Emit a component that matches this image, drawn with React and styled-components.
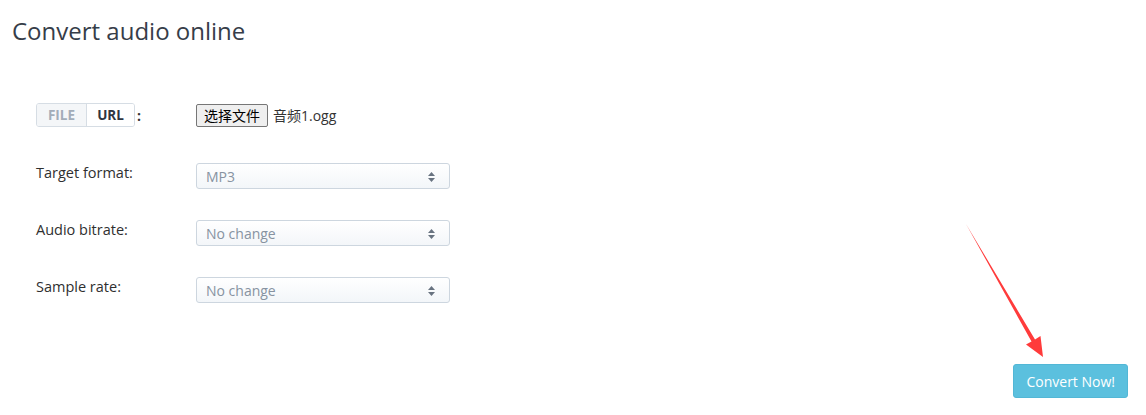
import React from "react";
import styled, { createGlobalStyle } from "styled-components";

const Global = createGlobalStyle`
  html, body { margin: 0; padding: 0; background: #ffffff; }
  body { font-family: "Open Sans", "Noto Sans", sans-serif; color: #333; }
`;

const Page = styled.div`
  position: relative;
  width: 1146px;
  height: 415px;
  box-sizing: border-box;
  padding: 14px 18px 0 12px;
`;

const Title = styled.h1`
  margin: 0;
  font-size: 24px;
  font-weight: 400;
  line-height: 33px;
  color: #363d49;
`;

const Form = styled.div`
  display: flex;
  flex-direction: column;
  gap: 31px;
  margin: 56px 0 0 24px;
`;

const Row = styled.div`
  display: grid;
  grid-template-columns: 160px 254px;
  align-items: ${(p) => (p.$center ? "center" : "start")};
  margin-bottom: ${(p) => (p.$first ? "5px" : "0")};
`;

const Label = styled.div`
  font-size: 14.5px;
  line-height: 19px;
  color: #2f2f2f;
`;

const Toggle = styled.div`
  display: flex;
  align-items: center;
`;

const Seg = styled.div`
  display: flex;
  border: 1px solid #d6dde4;
  border-radius: 3px;
  overflow: hidden;
  height: 22px;
`;

const SegItem = styled.span`
  display: flex;
  align-items: center;
  justify-content: center;
  width: ${(p) => p.$w}px;
  font-size: 13.5px;
  font-weight: 700;
  color: ${(p) => (p.$active ? "#a3adb9" : "#2f3541")};
  background: ${(p) => (p.$active ? "#f4f6f8" : "#ffffff")};
  border-right: ${(p) => (p.$active ? "1px solid #d6dde4" : "none")};
`;

const Colon = styled.span`
  margin-left: 2px;
  font-size: 14px;
  font-weight: 700;
  color: #333;
`;

const FileWrap = styled.div`
  display: flex;
  align-items: center;
  gap: 5px;
  height: 24px;
`;

const FileButton = styled.button`
  height: 23px;
  padding: 0 7px;
  font-family: "Noto Sans CJK SC", sans-serif;
  font-size: 14px;
  line-height: 20px;
  color: #000;
  background: #efefef;
  border: 1px solid #767676;
  border-radius: 2px;
`;

const FileName = styled.span`
  font-family: "Open Sans", "Noto Sans CJK SC", sans-serif;
  font-size: 14px;
  color: #333;
`;

const Select = styled.div`
  position: relative;
  box-sizing: border-box;
  height: 26px;
  display: flex;
  align-items: center;
  padding: 0 9px;
  border: 1px solid #cdd6df;
  border-radius: 3px;
  background: linear-gradient(#ffffff, #f3f6f9);
  font-size: 14px;
  color: #8793a1;
`;

const Caret = styled.svg`
  position: absolute;
  right: 14px;
  top: 8px;
`;

const Footer = styled.div`
  display: flex;
  justify-content: flex-end;
  margin-top: 61px;
`;

const Button = styled.button`
  height: 34px;
  padding: 0 12px;
  font-family: "Open Sans", sans-serif;
  font-size: 14px;
  color: #ffffff;
  background: #5bc0de;
  border: 1px solid #52b7d6;
  border-radius: 3px;
`;

const Arrow = styled.svg`
  position: absolute;
  left: 0;
  top: 0;
  pointer-events: none;
`;

const SelectBox = ({ value }) => (
  <Select>
    {value}
    <Caret width="7" height="10" viewBox="0 0 7 10">
      <path d="M3.5 0 L7 4 H0 Z M0 6 H7 L3.5 10 Z" fill="#687380" />
    </Caret>
  </Select>
);

export default function App() {
  return (
    <>
      <Global />
      <Page>
        <Title>Convert audio online</Title>
        <Form>
          <Row $center $first>
            <Toggle>
              <Seg>
                <SegItem $active $w={49}>FILE</SegItem>
                <SegItem $w={47}>URL</SegItem>
              </Seg>
              <Colon>:</Colon>
            </Toggle>
            <FileWrap>
              <FileButton>选择文件</FileButton>
              <FileName>音频1.ogg</FileName>
            </FileWrap>
          </Row>
          <Row>
            <Label>Target format:</Label>
            <SelectBox value="MP3" />
          </Row>
          <Row>
            <Label>Audio bitrate:</Label>
            <SelectBox value="No change" />
          </Row>
          <Row>
            <Label>Sample rate:</Label>
            <SelectBox value="No change" />
          </Row>
        </Form>
        <Footer>
          <Button>Convert Now!</Button>
        </Footer>
        <Arrow width="1146" height="415" viewBox="0 0 1146 415">
          <polygon
            points="966,224 1031.5,341.5 1026,344.5 1043,357 1040.5,336 1035,339.5"
            fill="#ff3b3b"
          />
        </Arrow>
      </Page>
    </>
  );
}
